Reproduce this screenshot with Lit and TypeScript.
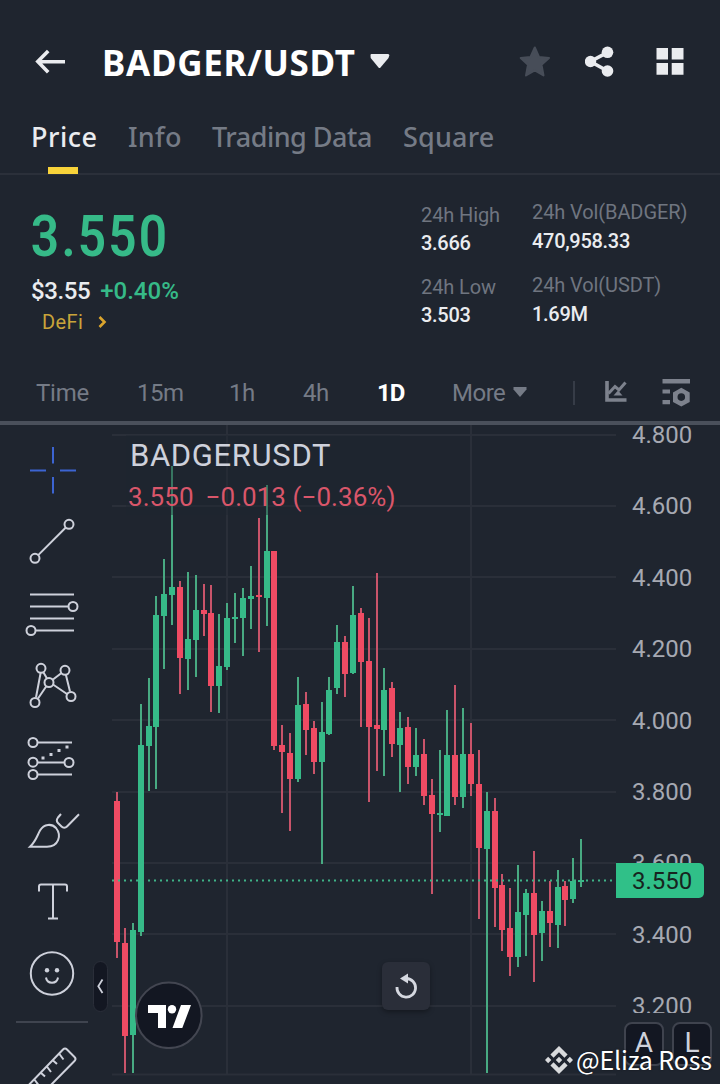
import { LitElement, html, svg, css } from "lit";
import { customElement } from "lit/decorators.js";
import { classMap } from "lit/directives/class-map.js";

type Candle = [number, number, number, number, 0 | 1]; // high, top, bottom, low, rising

const CANDLES: Candle[] = [
  [792, 801, 942, 958, 0], [928, 943, 1036, 1073, 0], [923, 930, 1035, 1073, 1], [704, 745, 932, 936, 1],
  [678, 726, 746, 791, 1], [596, 615, 727, 789, 1], [559, 594, 616, 669, 1], [466, 587, 595, 625, 1],
  [581, 587, 658, 694, 0], [572, 639, 659, 690, 1], [575, 610, 640, 677, 1], [584, 610, 614, 636, 0],
  [585, 613, 686, 712, 0], [614, 666, 686, 713, 1], [603, 618, 667, 670, 1], [593, 617, 619, 643, 1],
  [588, 598, 618, 656, 1], [566, 596, 599, 629, 1], [518, 595, 597, 652, 0], [485, 551, 598, 626, 1],
  [551, 551, 746, 750, 0], [725, 745, 752, 813, 0], [733, 753, 779, 831, 0], [677, 705, 779, 782, 1],
  [692, 704, 730, 755, 0], [721, 728, 762, 774, 0], [702, 732, 762, 864, 1], [677, 690, 734, 735, 1],
  [625, 642, 688, 694, 1], [636, 642, 674, 697, 0], [586, 615, 673, 674, 1], [608, 613, 662, 727, 0],
  [618, 661, 727, 802, 0], [573, 725, 729, 771, 0], [668, 690, 730, 776, 1], [682, 688, 744, 757, 0],
  [712, 728, 745, 792, 1], [717, 727, 767, 784, 0], [728, 755, 767, 776, 1], [739, 754, 796, 805, 0],
  [779, 795, 814, 894, 0], [750, 813, 815, 832, 1], [710, 755, 816, 816, 1], [685, 755, 797, 805, 0],
  [708, 754, 797, 808, 1], [723, 754, 784, 796, 0], [750, 784, 848, 919, 0], [792, 811, 849, 1073, 1],
  [798, 811, 888, 927, 0], [874, 885, 930, 951, 0], [888, 928, 957, 976, 0], [865, 912, 957, 967, 1],
  [889, 893, 915, 956, 1], [851, 893, 935, 982, 0], [901, 911, 933, 961, 1], [881, 911, 923, 947, 0],
  [870, 887, 925, 948, 1], [881, 886, 900, 926, 0], [858, 881, 899, 903, 1], [839, 880, 882, 887, 1],
];
const PRICES = ["4.800", "4.600", "4.400", "4.200", "4.000", "3.800", "3.600", "3.400", "3.200"];

@customElement("price-chart")
class PriceChart extends LitElement {
  static styles = css`
    :host { display: block; width: 512px; height: 659px; }
    svg { display: block; }
    .grid { stroke: #2a2f39; stroke-width: 2; }
    .last { stroke: #3fb388; stroke-width: 2; stroke-dasharray: 2 4; }
    .wick.up { fill: #48aa82; }
    .wick.down { fill: #c9546a; }
    .body.up { fill: #36ba88; }
    .body.down { fill: #ef4b63; }
  `;
  render() {
    return html`<svg width="512" height="659" viewBox="104 425 512 659">
      ${PRICES.map((_, i) => { const y = Math.round(434.5 + i * 71.4); return svg`<line class="grid" x1="112" x2="616" y1=${y} y2=${y}></line>`; })}
      <path class="grid" d="M112 1074.500H616M227 425V1074M471 425V1074"></path>
      ${CANDLES.map(([high, top, bottom, low, up], i) => {
        const x = Math.round(117 + (i * 464) / 59 + 0.1);
        const dir = up ? "up" : "down";
        return svg`<rect class="wick ${dir}" x=${x - 1} y=${high} width="2" height=${low - high}></rect>
          <rect class="body ${dir}" x=${x - 3} y=${top} width="6" height=${bottom - top}></rect>`;
      })}
      <path class="last" d="M112 880.500H616"></path>
    </svg>`;
  }
}

@customElement("tool-bar")
class ToolBar extends LitElement {
  static styles = css`
    :host { display: block; width: 104px; height: 650px; padding-top: 9px; overflow: hidden; }
    svg { display: block; fill: none; stroke: #ced1db; stroke-width: 2; }
    .active { stroke: #3c64d2; }
    .solid { fill: #ced1db; stroke: none; }
    .rule { width: 72px; height: 2px; margin: 11px 0 0 16px; background: #3f444f; }
  `;
  tools = [
    svg`<path class="active" d="M53 447v16.500M53 477v16.500M30 470.500h16M60 470.500h16"></path>`,
    svg`<circle cx="69" cy="524.300" r="4.500"></circle><circle cx="35" cy="558.300" r="4.500"></circle><path d="M65.800 527.500L38.200 555.100"></path>`,
    svg`<path d="M30 594.500h44M30 606.500h38.500M30 618.500h44M35.500 630.500H74"></path><circle cx="73" cy="606.500" r="4.500"></circle><circle cx="31" cy="630.500" r="4.500"></circle>`,
    svg`<path d="M40.600 673L36 697.500M43.500 672.500L47 678.500M53 679.500L61.500 673M65.800 674.500L70 691.500M53 684.500L67 694M46.500 686L38 698.500"></path><circle cx="41" cy="668.300" r="4.500"></circle><circle cx="65" cy="670.300" r="4.500"></circle><circle cx="49" cy="682.500" r="4.500"></circle><circle cx="71" cy="696.500" r="4.500"></circle><circle cx="35" cy="702.500" r="4.500"></circle>`,
    svg`<path d="M37.500 742.500H72M37.500 762.500h27M37.500 774.500H72"></path><circle cx="33" cy="742.500" r="4.500"></circle><circle cx="33" cy="762.200" r="4.500"></circle><circle cx="69" cy="762.500" r="4.500"></circle><circle cx="33" cy="774.500" r="4.500"></circle><path class="solid" d="M41.500 756.500h3v3h-3zM49.500 753h3v3h-3zM57.500 749h3v3h-3zM65.500 745.500h3v3h-3z"></path>`,
    svg`<path d="M30 846.800C36 841 37 836 40 830.500C44 823.500 52 823.500 56 828C62 835.500 58.500 846.800 47 846.800ZM61 814L58 817.500C56.500 819.500 56.500 821.500 58 823L61.500 826.500C63 828 65.500 828 67 826.500L79 814.200"></path>`,
    svg`<path d="M39 891.500V886.500Q39 884.500 41 884.500H65Q67 884.500 67 886.500V891.500M53 884.500V918.500M48 918.500h10"></path>`,
    svg`<circle cx="52" cy="973.500" r="21.200"></circle><path d="M46 977.500C47 984.500 57 984.500 58 977.500"></path><circle class="solid" cx="47" cy="970.300" r="2.200"></circle><circle class="solid" cx="57" cy="970.300" r="2.200"></circle>`,
  ];
  render() {
    return html`
      ${this.tools.map((t, i) => html`<svg width="104" height="72" viewBox="0 ${434 + i * 72} 104 72">${t}</svg>`)}
      <div class="rule"></div>
      <svg width="104" height="61" viewBox="0 1023 104 61"><path d="M22 1092L63 1049.500Q65 1047.500 67 1049.500L74.500 1057Q76.500 1059 74.500 1061L44 1092M59 1053.500l4.500 6M52.500 1060l4.500 4M46.500 1066l4.500 6M40.500 1072.500l4.500 4M34 1079l4.500 6"></path></svg>`;
  }
}

@customElement("app-root")
class AppRoot extends LitElement {
  static styles = css`
    :host { display: block; width: 720px; height: 1084px; overflow: hidden; background: #1f252f; color: #eaecef; font-family: Roboto, "Liberation Sans", sans-serif; white-space: nowrap; }
    svg { display: block; }
    header { display: flex; align-items: center; height: 110px; padding: 14px 0 0; box-sizing: border-box; }
    .back { margin-left: 34px; }
    h1 { margin: 1px 0 0 35px; width: 253px; font: 700 35px/40px "Noto Sans", sans-serif; letter-spacing: .7px; color: #fff; }
    .caret { margin-left: 15px; }
    .star { margin-left: 129px; }
    .share { margin-left: 34px; }
    .apps { margin-left: 40px; }
    nav { display: flex; height: 62.500px; border-bottom: 2px solid #2b303a; font: 500 27px/54px "Noto Sans", sans-serif; color: #757b86; }
    .tab { height: 63px; display: flex; flex-direction: column; }
    .tab:nth-child(1) { margin-left: 31px; width: 97px; letter-spacing: .5px; }
    .tab:nth-child(2) { width: 84px; letter-spacing: .3px; }
    .tab:nth-child(3) { width: 191px; letter-spacing: -.5px; }
    .tab:nth-child(4) { letter-spacing: .2px; }
    .tab.on { color: #eaecef; }
    .tab.on::after { content: ""; width: 30px; height: 6.500px; margin: 3px 0 0 17px; background: #f8d33a; flex: none; }
    .stats { display: flex; height: 190.500px; }
    .quote { width: 421px; padding: 31px 0 0 30px; box-sizing: border-box; }
    .big { padding-left: 1px; font-size: 57px; line-height: 62px; font-weight: 600; letter-spacing: 2.500px; color: #36ba88; transform: scaleX(.87); transform-origin: 0 0; }
    .sub { display: flex; gap: 10px; padding-left: 1px; font-size: 24px; font-weight: 500; line-height: 30px; margin-top: 8px; }
    .usd { letter-spacing: -.4px; }
    .pct { color: #36ba88; }
    .tag { display: flex; align-items: center; gap: 15px; margin: 3px 0 0 12px; font-size: 20px; line-height: 26px; letter-spacing: .4px; color: #c9a43a; }
    .metrics { font-size: 20px; line-height: 28px; }
    .metrics.a { width: 111px; padding-top: 26px; }
    .metrics.b { padding-top: 23px; }
    .metric { height: 72px; }
    .b .metric { height: 73px; }
    .k { color: #6f7580; letter-spacing: -.1px; }
    .v { font-weight: 500; letter-spacing: -.3px; }
    .b .v { padding-top: 1px; }
    .frames { display: flex; align-items: center; height: 56px; border-bottom: 4px solid #4a505b; font-size: 24px; line-height: 56px; letter-spacing: -.5px; color: #757b86; }
    .frame:nth-child(1) { margin-left: 36px; width: 101px; letter-spacing: -.2px; }
    .frame:nth-child(2) { width: 92px; }
    .frame:nth-child(3) { width: 74px; }
    .frame:nth-child(4) { width: 74px; }
    .frame:nth-child(5) { width: 75px; }
    .frame.on { color: #fff; font-weight: 700; letter-spacing: -1px; }
    .more { display: flex; align-items: center; width: 121px; gap: 8px; }
    .more svg { margin-top: -1px; }
    .sep { width: 2px; height: 24px; background: #363c47; }
    .ind { margin-left: 30px; }
    .set { margin-left: 34px; }
    .board { position: relative; display: flex; height: 659px; }
    .axis { width: 104px; height: 588px; overflow: hidden; display: flex; flex-direction: column; font-size: 24px; line-height: 71.400px; color: #a6a9b2; }
    .axis .p { height: 71.400px; flex: none; padding-left: 16px; }
    .axis .p:first-child { margin-top: -25px; }
    .legend { position: absolute; left: 126px; top: 10px; width: 274px; height: 80px; background: rgba(31, 37, 47, .4); }
    .sym { padding-left: 4px; font-size: 31px; line-height: 42px; letter-spacing: .65px; color: #ced1db; }
    .chg { display: flex; gap: 12px; padding-left: 2px; font-size: 26px; line-height: 41px; letter-spacing: .05px; color: #d9566a; }
    .now { position: absolute; left: 616px; top: 438px; width: 72px; height: 35px; padding-left: 16px; border-radius: 0 5px 5px 0; background: #30c088; color: #17241f; font-size: 24px; line-height: 36px; }
    .fold { position: absolute; left: 93px; top: 536px; width: 13px; height: 49px; border: 1.500px solid #2a2e39; border-radius: 8px; background: #131722; }
    .reset { position: absolute; left: 382px; top: 537px; width: 48px; height: 48px; border-radius: 6px; background: #2a2e39; box-shadow: 0 2px 5px rgba(0, 0, 0, .35); }
    .logo { position: absolute; left: 135px; top: 556px; }
    .key { position: absolute; top: 597px; width: 36px; height: 40px; border: 2px solid #3f434e; border-radius: 8px; background: #131722; text-align: center; font-size: 28px; line-height: 38px; color: #ced1db; }
    .auto { left: 624px; }
    .log { left: 672px; }
    .sign { position: absolute; left: 545px; top: 618px; display: flex; align-items: center; gap: 3px; height: 34px; font: 400 25px/34px "Noto Sans CJK SC", "Noto Sans", sans-serif; letter-spacing: -.15px; color: #fff; text-shadow: 0 0 2px rgba(0, 0, 0, .5); }
    .name { margin-top: -3px; }
  `;
  metric(k: string, v: string) {
    return html`<div class="metric"><div class="k">${k}</div><div class="v">${v}</div></div>`;
  }
  render() {
    return html`
      <header>
        <svg class="back" width="33" height="26" viewBox="34 49 33 26" fill="none" stroke="#eaecef" stroke-width="3.600"><path d="M37.500 61.800H65M48.200 51L37.800 61.500L48.200 72.200"></path></svg>
        <h1>BADGER/USDT</h1>
        <svg class="caret" width="20" height="20" viewBox="370.500 52 20 20" fill="#eaecef"><path d="M372 54H388.500Q390 54 389.800 55.500L389 58L381 67.500Q380 68.500 379 67.500L371.200 58L371 55Q371 54 372 54Z"></path></svg>
        <svg class="star" width="32" height="32" viewBox="519 46 32 32" fill="#474d58" stroke="#474d58" stroke-width="2" stroke-linejoin="round"><path d="M534.800 47.500L539 57L549 58L541.500 64.800L543.500 75.500L534.800 70.500L526 75.500L528 64.800L520.700 58L530.500 57Z"></path></svg>
        <svg class="share" width="30" height="32" viewBox="585 46 30 32" fill="#eaecef"><path d="M607.500 52.300L590.500 61.500L607.500 71" fill="none" stroke="#eaecef" stroke-width="3.600"></path><circle cx="590.500" cy="61.500" r="5.700"></circle><circle cx="607.500" cy="52.300" r="5.800"></circle><circle cx="607.500" cy="71" r="5.800"></circle></svg>
        <svg class="apps" width="30" height="30" viewBox="655 47 30 30" fill="#eaecef"><path d="M656.500 48H668V59.500H656.500ZM671.700 48H683.500V59.500H671.700ZM656.500 63H668V74.700H656.500ZM671.700 63H683.500V74.700H671.700Z"></path></svg>
      </header>
      <nav>${["Price", "Info", "Trading Data", "Square"].map((t, i) => html`<div class=${classMap({ tab: true, on: i === 0 })}>${t}</div>`)}</nav>
      <section class="stats">
        <div class="quote">
          <div class="big">3.550</div>
          <div class="sub"><span class="usd">$3.55</span><span class="pct">+0.40%</span></div>
          <div class="tag">DeFi <svg width="9" height="12" viewBox="0 0 9 12" fill="none" stroke="#dba52d" stroke-width="2.600"><path d="M1.500 1L6.500 6L1.500 11"></path></svg></div>
        </div>
        <div class="metrics a">${this.metric("24h High", "3.666")}${this.metric("24h Low", "3.503")}</div>
        <div class="metrics b">${this.metric("24h Vol(BADGER)", "470,958.33")}${this.metric("24h Vol(USDT)", "1.69M")}</div>
      </section>
      <div class="frames">
        ${["Time", "15m", "1h", "4h", "1D"].map((t, i) => html`<div class=${classMap({ frame: true, on: i === 4 })}>${t}</div>`)}
        <div class="more">More <svg width="14" height="12" viewBox="0 0 14 12" fill="#757b86"><path d="M.5 0H13.500V2.500L7 10L.5 2.500Z"></path></svg></div>
        <div class="sep"></div>
        <svg class="ind" width="22" height="24" viewBox="605.500 381 22 24" fill="none" stroke="#7d828d"><path stroke-width="3.600" d="M607.500 380.500V400H627"></path><path stroke-width="3" d="M609 393.500L615.500 386.500L619.500 390L626 382.500"></path><path fill="#7d828d" stroke="none" d="M618.500 390.500L623 395.500H614Z"></path></svg>
        <svg class="set" width="30" height="28" viewBox="661 378.500 30 28" fill="#7d828d"><path fill-rule="evenodd" d="M662.500 378.500H690V383H662.500ZM662.500 389H670V393H662.500ZM662.500 399.500H670V403.800H662.500ZM681.300 387.200L689.700 392V401.500L681.300 406L673 401.500V392ZM681.300 392.800A3.800 3.800 0 1 0 681.300 400.400A3.800 3.800 0 1 0 681.300 392.800Z"></path></svg>
      </div>
      <div class="board">
        <tool-bar></tool-bar>
        <price-chart></price-chart>
        <div class="axis">${PRICES.map((p) => html`<div class="p">${p}</div>`)}</div>
        <div class="legend"><div class="sym">BADGERUSDT</div><div class="chg"><span>3.550</span><span>−0.013 (−0.36%)</span></div></div>
        <div class="now">3.550</div>
        <div class="fold"><svg width="13" height="49" viewBox="94.500 962.500 13 49" fill="none" stroke="#ced1db" stroke-width="1.800"><path d="M103 980L98.800 986.700L103 993.500"></path></svg></div>
        <div class="reset"><svg width="48" height="48" viewBox="382 962 48 48" fill="none" stroke="#d5d8e0" stroke-width="2.800"><path d="M397 987A9.300 9.300 0 1 0 406.500 978.500"></path><path fill="#d5d8e0" stroke="none" d="M400 978.500L408 973.500V983.500Z"></path></svg></div>
        <svg class="logo" width="68" height="68" viewBox="135 981 68 68" fill="#fff"><circle cx="168.800" cy="1015.300" r="32.800" fill="#131722" stroke="#434651" stroke-width="2"></circle><path d="M148 1005H166V1028H158V1013H148ZM181 1005H191L182.300 1028H172.500Z"></path><circle cx="172" cy="1009.300" r="4.200"></circle></svg>
        <div class="key auto">A</div>
        <div class="key log">L</div>
        <div class="sign"><svg width="28" height="28" viewBox="0 0 126.610 126.610" fill="#d9dbdd"><path d="M38.730 53.200L63.300 28.630L87.880 53.210L102.180 38.910L63.300 0L24.430 38.900ZM0 63.310L14.300 49L28.600 63.300L14.300 77.610ZM38.730 73.410L63.300 98L87.880 73.400L102.180 87.690L63.300 126.610L24.430 87.740ZM98 63.310L112.300 49L126.600 63.310L112.320 77.610ZM77.830 63.300L63.300 48.780L48.780 63.300L63.300 77.800Z"></path></svg><span class="name">@Eliza Ross</span></div>
      </div>`;
  }
}
